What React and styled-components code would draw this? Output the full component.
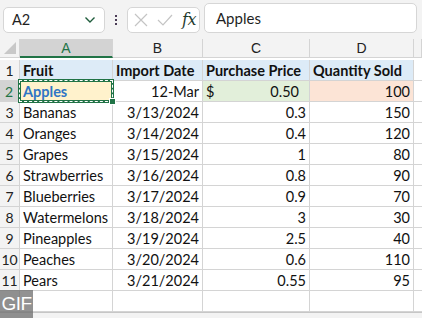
import React from "react";
import styled, { createGlobalStyle } from "styled-components";

const GlobalStyle = createGlobalStyle`
  html, body { margin: 0; padding: 0; background: #ffffff; }
  body { width: 422px; height: 318px; overflow: hidden; font-family: "Lato", "Liberation Sans", sans-serif; }
`;

const GREEN = "#217346";
const GRID = "#d4d4d4";
const COLS = "20px 93px 90px 107px 104px 8px";

const Window = styled.div`
  position: relative;
  width: 422px;
  height: 318px;
  overflow: hidden;
  background: #ffffff;
`;

const FormulaBar = styled.div`
  display: flex;
  align-items: center;
  height: 39px;
  padding: 0 5px 0 3px;
  box-sizing: border-box;
  background: #f3f3f3;
`;

const Box = styled.div`
  display: flex;
  align-items: center;
  box-sizing: border-box;
  height: ${(p) => p.$h || 26}px;
  width: ${(p) => (p.$w ? p.$w + "px" : "auto")};
  flex: ${(p) => (p.$grow ? 1 : "none")};
  background: #ffffff;
  border: 1px solid #d6d6d6;
  border-radius: 5px;
  padding: 0 ${(p) => p.$pad || 8}px;
  font-size: ${(p) => p.$fs || 14.5}px;
  color: #1f1f1f;
  margin-top: ${(p) => p.$mt || 0}px;
  margin-left: ${(p) => p.$ml || 0}px;
`;

const NameText = styled.span`
  flex: 1;
`;

const Dots = styled.div`
  width: 22px;
  display: flex;
  flex-direction: column;
  align-items: center;
  gap: 2px;
  span {
    width: 2px;
    height: 2px;
    background: #4a3b55;
  }
`;

const FxGroup = styled.div`
  display: flex;
  align-items: center;
  gap: 9px;
  flex: 1;
`;

const Fx = styled.span`
  font-family: "DejaVu Serif", "Liberation Serif", serif;
  font-style: italic;
  font-size: 16px;
  color: #1f3a2e;
  margin-left: auto;
  letter-spacing: -0.5px;
`;

const Sheet = styled.div`
  display: grid;
  grid-template-columns: ${COLS};
  grid-auto-rows: 21px;
`;

const ColHead = styled.div`
  height: 19px;
  box-sizing: border-box;
  display: flex;
  align-items: center;
  justify-content: center;
  font-size: 14px;
  font-family: "Liberation Sans", sans-serif;
  color: ${(p) => (p.$sel ? GREEN : "#222")};
  background: ${(p) => (p.$sel ? "#d3d3d3" : "#f3f3f3")};
  border-right: 1px solid ${GRID};
  border-bottom: ${(p) => (p.$sel ? `2px solid ${GREEN}` : `1px solid ${GRID}`)};
`;

const Corner = styled(ColHead)`
  position: relative;
  &::after {
    content: "";
    position: absolute;
    right: 3px;
    bottom: 3px;
    width: 0;
    height: 0;
    border-left: 12px solid transparent;
    border-bottom: 12px solid #c8c8c8;
  }
`;

const RowHead = styled.div`
  box-sizing: border-box;
  display: flex;
  align-items: center;
  justify-content: center;
  font-size: 14px;
  color: ${(p) => (p.$sel ? GREEN : "#222")};
  background: ${(p) => (p.$sel ? "#d3d3d3" : "#f3f3f3")};
  border-right: ${(p) => (p.$sel ? `2px solid ${GREEN}` : `1px solid ${GRID}`)};
  border-bottom: 1px solid ${GRID};
`;

const Cell = styled.div`
  position: relative;
  box-sizing: border-box;
  display: flex;
  align-items: center;
  justify-content: ${(p) => (p.$right ? "flex-end" : "space-between")};
  padding: 1px 3px 0 3px;
  font-size: 14.5px;
  font-weight: ${(p) => (p.$bold ? 700 : 400)};
  color: ${(p) => p.$color || "#111"};
  background: ${(p) => p.$bg || "#ffffff"};
  border-right: 1px solid ${GRID};
  border-bottom: 1px solid ${GRID};
  white-space: nowrap;
`;

const Gutter = styled.div`
  border-bottom: 1px solid ${GRID};
  background: #ffffff;
`;

const Selection = styled.div`
  position: absolute;
  z-index: 3;
  left: -2px;
  top: -2px;
  right: -2px;
  bottom: -2px;
  border: 3px solid ${GREEN};
  pointer-events: none;
  &::before {
    content: "";
    position: absolute;
    inset: -2px;
    border: 1px dashed #ffffff;
  }
  &::after {
    content: "";
    position: absolute;
    right: -5px;
    bottom: -5px;
    width: 5px;
    height: 5px;
    background: ${GREEN};
    border: 1px solid #ffffff;
  }
`;

const Footer = styled.div`
  height: 8px;
  border-top: 1px solid #c6c6c6;
  background: #f3f3f3;
`;

const Watermark = styled.div`
  position: absolute;
  left: 0;
  bottom: 0;
  width: 33px;
  height: 28px;
  background: rgba(110, 110, 110, 0.75);
  color: #ffffff;
  font-family: "Liberation Sans", sans-serif;
  font-size: 19px;
  display: flex;
  align-items: center;
  justify-content: center;
  letter-spacing: -0.5px;
`;

const Chevron = () => (
  <svg width="12" height="8" viewBox="0 0 12 8">
    <path d="M1.5 1.5 L6 6 L10.5 1.5" fill="none" stroke="#1f5c3c" strokeWidth="1.4" />
  </svg>
);

const Cross = () => (
  <svg width="14" height="14" viewBox="0 0 14 14">
    <path d="M1 1 L13 13 M13 1 L1 13" stroke="#c4c4c4" strokeWidth="1.2" />
  </svg>
);

const Check = () => (
  <svg width="16" height="12" viewBox="0 0 16 12">
    <path d="M1 6 L6 11 L15 1" fill="none" stroke="#c4c4c4" strokeWidth="1.2" />
  </svg>
);

const rows = [
  ["Bananas", "3/13/2024", "0.3", "150"],
  ["Oranges", "3/14/2024", "0.4", "120"],
  ["Grapes", "3/15/2024", "1", "80"],
  ["Strawberries", "3/16/2024", "0.8", "90"],
  ["Blueberries", "3/17/2024", "0.9", "70"],
  ["Watermelons", "3/18/2024", "3", "30"],
  ["Pineapples", "3/19/2024", "2.5", "40"],
  ["Peaches", "3/20/2024", "0.6", "110"],
  ["Pears", "3/21/2024", "0.55", "95"],
];

export default function App() {
  return (
    <Window>
      <GlobalStyle />
      <FormulaBar>
        <Box $w={102} $pad={8}>
          <NameText>A2</NameText>
          <Chevron />
        </Box>
        <Dots>
          <span />
          <span />
          <span />
        </Dots>
        <Box $w={73} $pad={6}>
          <FxGroup>
            <Cross />
            <Check />
            <Fx>fx</Fx>
          </FxGroup>
        </Box>
        <Box $grow $h={30} $mt={-3} $pad={11} $ml={4} $fs={15}>
          Apples
        </Box>
      </FormulaBar>
      <Sheet>
        <Corner />
        <ColHead $sel>A</ColHead>
        <ColHead>B</ColHead>
        <ColHead>C</ColHead>
        <ColHead>D</ColHead>
        <ColHead />

        <RowHead>1</RowHead>
        <Cell $bold $bg="#ddebf7">Fruit</Cell>
        <Cell $bold $bg="#ddebf7">Import Date</Cell>
        <Cell $bold $bg="#ddebf7">Purchase Price</Cell>
        <Cell $bold $bg="#ddebf7">Quantity Sold</Cell>
        <Gutter />

        <RowHead $sel>2</RowHead>
        <Cell $bold $bg="#fff2cc" $color="#2f75c5">
          Apples
          <Selection />
        </Cell>
        <Cell $right>12-Mar</Cell>
        <Cell $bg="#e2efda">
          <span>$</span>
          <span style={{ paddingRight: 7 }}>0.50</span>
        </Cell>
        <Cell $right $bg="#fce4d6">100</Cell>
        <Gutter />

        {rows.map((r, i) => (
          <React.Fragment key={r[0]}>
            <RowHead>{i + 3}</RowHead>
            <Cell>{r[0]}</Cell>
            <Cell $right>{r[1]}</Cell>
            <Cell $right>{r[2]}</Cell>
            <Cell $right>{r[3]}</Cell>
            <Gutter />
          </React.Fragment>
        ))}

        <RowHead />
        <Cell />
        <Cell />
        <Cell />
        <Cell />
        <Gutter />
      </Sheet>
      <Footer />
      <Watermark>GIF</Watermark>
    </Window>
  );
}
